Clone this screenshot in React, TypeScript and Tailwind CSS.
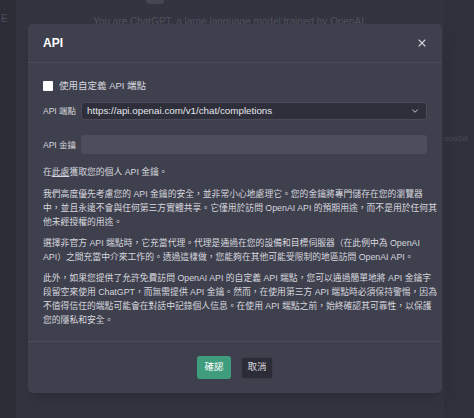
import { X, ChevronDown } from 'lucide-react'

const font = { fontFamily: '"Liberation Sans", "Noto Sans CJK TC", "Noto Sans", sans-serif' }

const paragraphs = [
  [
    '我們高度優先考慮您的 API 金鑰的安全，並非常小心地處理它。您的金鑰將專門儲存在您的瀏覽器',
    '中，並且永遠不會與任何第三方實體共享。它僅用於訪問 OpenAI API 的預期用途，而不是用於任何其',
    '他未經授權的用途。',
  ],
  [
    '選擇非官方 API 端點時，它充當代理。代理是通過在您的設備和目標伺服器（在此例中為 OpenAI',
    'API）之間充當中介來工作的。透過這樣做，您能夠在其他可能受限制的地區訪問 OpenAI API。',
  ],
  [
    '此外，如果您提供了允許免費訪問 OpenAI API 的自定義 API 端點，您可以通過簡單地將 API 金鑰字',
    '段留空來使用 ChatGPT，而無需提供 API 金鑰。然而，在使用第三方 API 端點時必須保持警惕，因為',
    '不值得信任的端點可能會在對話中記錄個人信息。在使用 API 端點之前，始終確認其可靠性，以保護',
    '您的隱私和安全。',
  ],
]

const App = () => {
  return (
    <div className="relative flex h-[418px] w-[474px] overflow-hidden bg-[#33343f] text-[#d6d7df]" style={font}>
      {/* background page, dimmed by the overlay */}
      <div className="w-[16px] bg-[#2b2c36] pl-[1px] pt-[5px]">
        <span className="text-[10px] text-[#4d4e5c]">E</span>
      </div>
      <div className="flex flex-1 flex-col items-center">
        <div className="ml-[-150px] h-[4px] w-[18px] rounded-b-sm bg-[#454654]" />
        <p className="mt-[10px] text-[10px] text-[#50515f]">You are ChatGPT, a large language model trained by OpenAI.</p>
      </div>
      <div className="w-[30px] bg-[#2f303b] pt-[124px]">
        <span className="text-[8px] text-[#4a4b58]">oooSill</span>
      </div>

      {/* modal */}
      <div className="absolute left-[28px] top-[24px] flex h-[369px] w-[414px] flex-col rounded-[5px] bg-[#3f404d] shadow-lg">
        <div className="flex h-[39px] items-center justify-between border-b border-[#4b4c59] pl-[15px] pr-[14px]">
          <h2 className="text-[12px] font-bold text-white">API</h2>
          <X size={12} strokeWidth={2.2} className="text-[#d1d2da]" />
        </div>

        <div className="flex flex-1 flex-col px-[15px] pt-[16px] text-[8.8px] leading-[14px]">
          <label className="flex items-center gap-[6px] text-[9.5px]">
            <span className="h-[10px] w-[10px] rounded-[1px] bg-white" />
            使用自定義 API 端點
          </label>

          <div className="mt-[9px] flex items-center gap-[5px]">
            <span className="shrink-0 whitespace-nowrap text-[8.5px]">API 端點</span>
            <div className="flex h-[18px] flex-1 items-center justify-between rounded-[3px] border border-[#4a4b57] bg-[#2e2f3a] pl-[5px] pr-[6px] text-[9.8px] text-[#e4e5ea]">
              https://api.openai.com/v1/chat/completions
              <ChevronDown size={10} strokeWidth={2.4} className="text-[#c4c5cd]" />
            </div>
          </div>

          <div className="mt-[15px] flex items-center gap-[5px]">
            <span className="shrink-0 whitespace-nowrap text-[8.5px]">API 金鑰</span>
            <div className="h-[19px] flex-1 rounded-[3px] bg-[#4c4e5b]" />
          </div>

          <p className="mt-[11px]">
            在<span className="underline">此處</span>獲取您的個人 API 金鑰。
          </p>
          {paragraphs.map((lines, i) => (
            <p key={i} className={i === 0 ? 'mt-[8px]' : 'mt-[7px]'}>
              {lines.map((line) => (
                <span key={line} className="block whitespace-nowrap">{line}</span>
              ))}
            </p>
          ))}
        </div>

        <div className="flex h-[52px] items-center justify-center gap-[10px] border-t border-[#4b4c59]">
          <button className="h-[23px] w-[34px] rounded-[3px] bg-[#3f9d7e] text-[9.5px] text-white">確認</button>
          <button className="h-[22px] w-[32px] rounded-[2px] border border-[#3b3c47] bg-[#2b2c36] text-[9.5px] text-[#d6d7df]">取消</button>
        </div>
      </div>
    </div>
  )
}

export default App
